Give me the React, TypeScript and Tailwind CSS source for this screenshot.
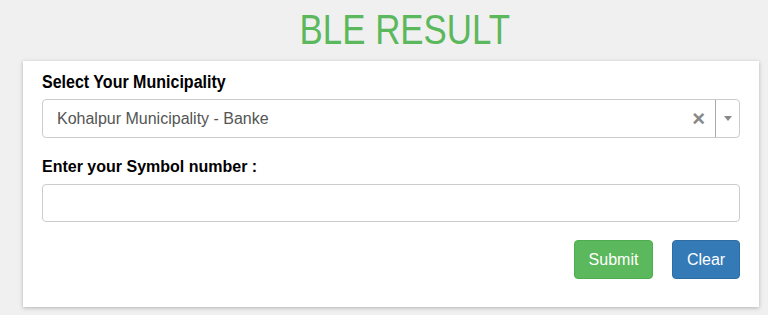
export default function App() {
  return (
    <div className="min-h-[315px] w-[768px] bg-[#f0f0f0] font-['Liberation_Sans',Arial,sans-serif]">
      {/* title */}
      <div className="flex justify-center pl-[42px] pt-[9px] h-[61px]">
        <h1 className="inline-block scale-x-[0.83] text-[42px] leading-[42px] text-[#5cb85c]">
          BLE RESULT
        </h1>
      </div>

      {/* form card */}
      <div className="ml-[23px] w-[736px] h-[246px] bg-white shadow-[0_1px_4px_rgba(0,0,0,0.25)] px-[19px] pt-[11px]">
        <label className="block origin-left scale-x-[0.89] font-bold text-[18px] leading-[20px] text-black">
          Select Your Municipality
        </label>
        <div className="mt-[7px] flex h-[39px] items-center rounded-[4px] border border-[#ccc] text-[16px] text-[#555]">
          <span className="flex-1 pl-[14px]">Kohalpur Municipality - Banke</span>
          <span className="pr-[10px] text-[22px] font-bold leading-none text-[#888]">×</span>
          <span className="flex h-full w-[24px] items-center justify-center border-l border-[#aaa]">
            <svg width="8" height="5" viewBox="0 0 8 5">
              <path d="M0 0h8L4 5z" fill="#888" />
            </svg>
          </span>
        </div>

        <label className="mt-[19px] block font-bold text-[16px] leading-[20px] text-black">
          Enter your Symbol number :
        </label>
        <input
          type="text"
          className="mt-[7px] block h-[38px] w-full rounded-[4px] border border-[#ccc] px-3 outline-none"
        />

        <div className="mt-[18px] flex justify-end gap-[19px]">
          <button className="h-[39px] w-[79px] rounded-[4px] border border-[#4cae4c] bg-[#5cb85c] text-[16px] text-white">
            Submit
          </button>
          <button className="h-[39px] w-[68px] rounded-[4px] border border-[#2e6da4] bg-[#337ab7] text-[16px] text-white">
            Clear
          </button>
        </div>
      </div>
    </div>
  );
}
